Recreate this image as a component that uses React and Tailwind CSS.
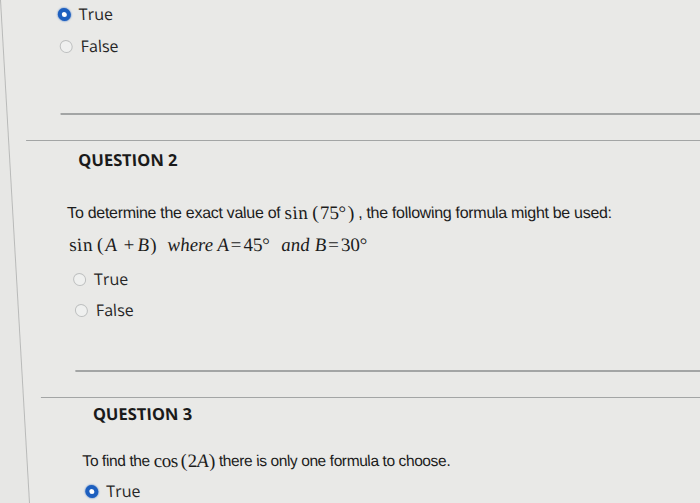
import React from 'react';

const sans = { fontFamily: '"Open Sans", "Noto Sans", sans-serif' };

const Radio = ({ checked }) =>
  checked ? (
    <span className="inline-block w-[13px] h-[13px] rounded-full border-[4px] border-[#1d5fbf] bg-white shadow-[0_0_2px_#1d5fbf]" />
  ) : (
    <span className="inline-block w-[13px] h-[13px] rounded-full border-[1.5px] border-[#bdbfbf] bg-[#eff0ef]" />
  );

const Option = ({ label, checked, className = '' }) => (
  <div className={`flex items-center h-[28px] pl-[56px] ${className}`}>
    <Radio checked={checked} />
    <span className="ml-[8px] text-[16px] text-[#262626]" style={sans}>
      {label}
    </span>
  </div>
);

const Rule = ({ inset, className = '' }) => (
  <div className={`h-[1.5px] bg-[#a3a5a5] ${inset} ${className}`} />
);

const Heading = ({ children, className = '' }) => (
  <div className={`flex items-center h-[24px] pl-[68px] ${className}`}>
    <span className="text-[16.5px] font-bold text-[#1a1a1a]" style={sans}>
      {children}
    </span>
  </div>
);

const Serif = ({ children, className = '' }) => (
  <span className={`font-['Liberation_Serif',serif] text-[19px] ${className}`}>{children}</span>
);

export default function App() {
  return (
    <div className="w-[700px] h-[503px] overflow-hidden bg-[#e7e7e5]">
      <div className="relative w-[760px] h-[503px] origin-top-left skew-x-[3.3deg] border-l border-[#b9bab9] bg-[#e9e9e7]">
        <Option label="True" checked />
        <Option label="False" className="mt-[4px]" />

        <Rule inset="ml-[53px]" className="mt-[53px]" />
        <Rule inset="ml-[17px]" className="mt-[25px]" />

        <Heading className="mt-[7px]">QUESTION 2</Heading>

        <div className="flex items-center h-[24px] pl-[54px] mt-[29px] text-[16px] tracking-[-0.3px] text-[#1c1c1c] font-['Liberation_Sans',Arial,sans-serif]">
          <span>To determine the exact value of&nbsp;</span>
          <Serif className="tracking-[0.5px]">sin</Serif>
          <Serif className="ml-[4px]">(</Serif>
          <Serif className="ml-[2px]">75°</Serif>
          <Serif className="ml-[2px]">)</Serif>
          <span>&nbsp;, the following formula might be used:</span>
        </div>

        <div className="flex items-center h-[24px] pl-[54px] mt-[8px] text-[#1c1c1c]">
          <Serif className="tracking-[0.5px]">sin</Serif>
          <Serif className="ml-[4px]">(</Serif>
          <Serif className="italic ml-[2px]">A</Serif>
          <Serif className="ml-[7px]">+</Serif>
          <Serif className="italic ml-[3px]">B</Serif>
          <Serif className="ml-[1px]">)</Serif>
          <Serif className="italic ml-[11px]">where</Serif>
          <Serif className="italic ml-[4px]">A</Serif>
          <Serif className="mx-[2px]">=</Serif>
          <Serif>45°</Serif>
          <Serif className="italic ml-[11px]">and</Serif>
          <Serif className="italic ml-[5px]">B</Serif>
          <Serif className="mx-[2px]">=</Serif>
          <Serif>30°</Serif>
        </div>

        <Option label="True" className="mt-[8px]" />
        <Option label="False" className="mt-[3px]" />

        <Rule inset="ml-[53px]" className="mt-[46px]" />
        <Rule inset="ml-[17px]" className="mt-[25px]" />

        <Heading className="mt-[4px]">QUESTION 3</Heading>

        <div className="flex items-center h-[24px] pl-[55px] mt-[23px] text-[15.5px] tracking-[-0.4px] text-[#1c1c1c] font-['Liberation_Sans',Arial,sans-serif]">
          <span>To find the&nbsp;</span>
          <Serif>cos</Serif>
          <Serif className="ml-[3px]">(</Serif>
          <Serif className="ml-[1px]">2</Serif>
          <Serif className="italic">A</Serif>
          <Serif className="ml-[1px]">)</Serif>
          <span>&nbsp;there is only one formula to choose.</span>
        </div>

        <Option label="True" checked className="mt-[4px]" />
      </div>
    </div>
  );
}
